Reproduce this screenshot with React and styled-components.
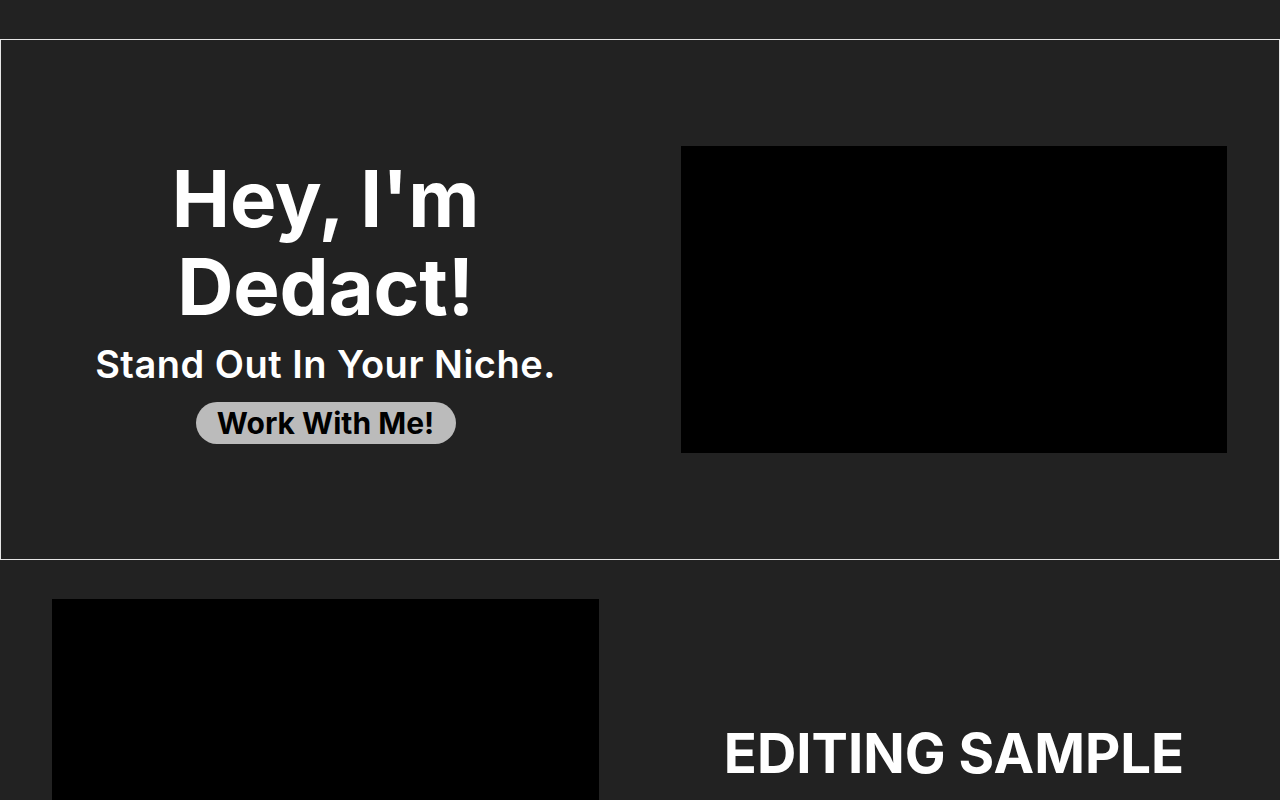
import styled, { createGlobalStyle } from "styled-components";

const GlobalStyle = createGlobalStyle`
  body {
    margin: 0;
    background: #222222;
    font-family: Inter, "Noto Sans", sans-serif;
    color: #ffffff;
  }
`;

const App = () => {
  return (
    <Page>
      <GlobalStyle />
      <TopBar />
      <Hero>
        <Intro>
          <Title>
            Hey, I'm
            <br />
            Dedact!
          </Title>
          <Tagline>Stand Out In Your Niche.</Tagline>
          <CtaButton>Work With Me!</CtaButton>
        </Intro>
        <VideoFrame />
      </Hero>
      <Sample>
        <VideoFrame />
        <SampleTitle>EDITING SAMPLE</SampleTitle>
      </Sample>
    </Page>
  );
};

const Page = styled.div`
  min-height: 100vh;
  overflow: hidden;
`;

const TopBar = styled.header`
  height: 39px;
`;

const Hero = styled.section`
  display: grid;
  grid-template-columns: 547px 546px;
  column-gap: 82px;
  align-items: center;
  height: 519px;
  padding: 0 51px;
  border: 1px solid #e6e6e6;
`;

const Intro = styled.div`
  display: flex;
  flex-direction: column;
  align-items: center;
  text-align: center;
`;

const Title = styled.h1`
  margin: 0;
  font-size: 78px;
  line-height: 88px;
  font-weight: 700;
  letter-spacing: -0.2px;
`;

const Tagline = styled.p`
  margin: 11px 0 0;
  font-size: 38px;
  line-height: 44px;
  font-weight: 600;
  letter-spacing: 0.5px;
`;

const CtaButton = styled.button`
  margin-top: 16px;
  height: 42px;
  width: 260px;
  padding: 0;
  border: none;
  border-radius: 21px;
  background: #bbbbbb;
  color: #000000;
  font-family: Inter, "Noto Sans", sans-serif;
  font-size: 30px;
  font-weight: 700;
  cursor: pointer;
`;

const VideoFrame = styled.div`
  width: 546px;
  height: 307px;
  background: #000000;
`;

const Sample = styled.section`
  display: grid;
  grid-template-columns: 547px 546px;
  column-gap: 82px;
  align-items: center;
  padding: 39px 52px;

  & > ${VideoFrame} {
    width: 547px;
  }
`;

const SampleTitle = styled.h2`
  margin: 0;
  text-align: center;
  font-size: 54.5px;
  line-height: 64px;
  font-weight: 700;
`;

export default App;
